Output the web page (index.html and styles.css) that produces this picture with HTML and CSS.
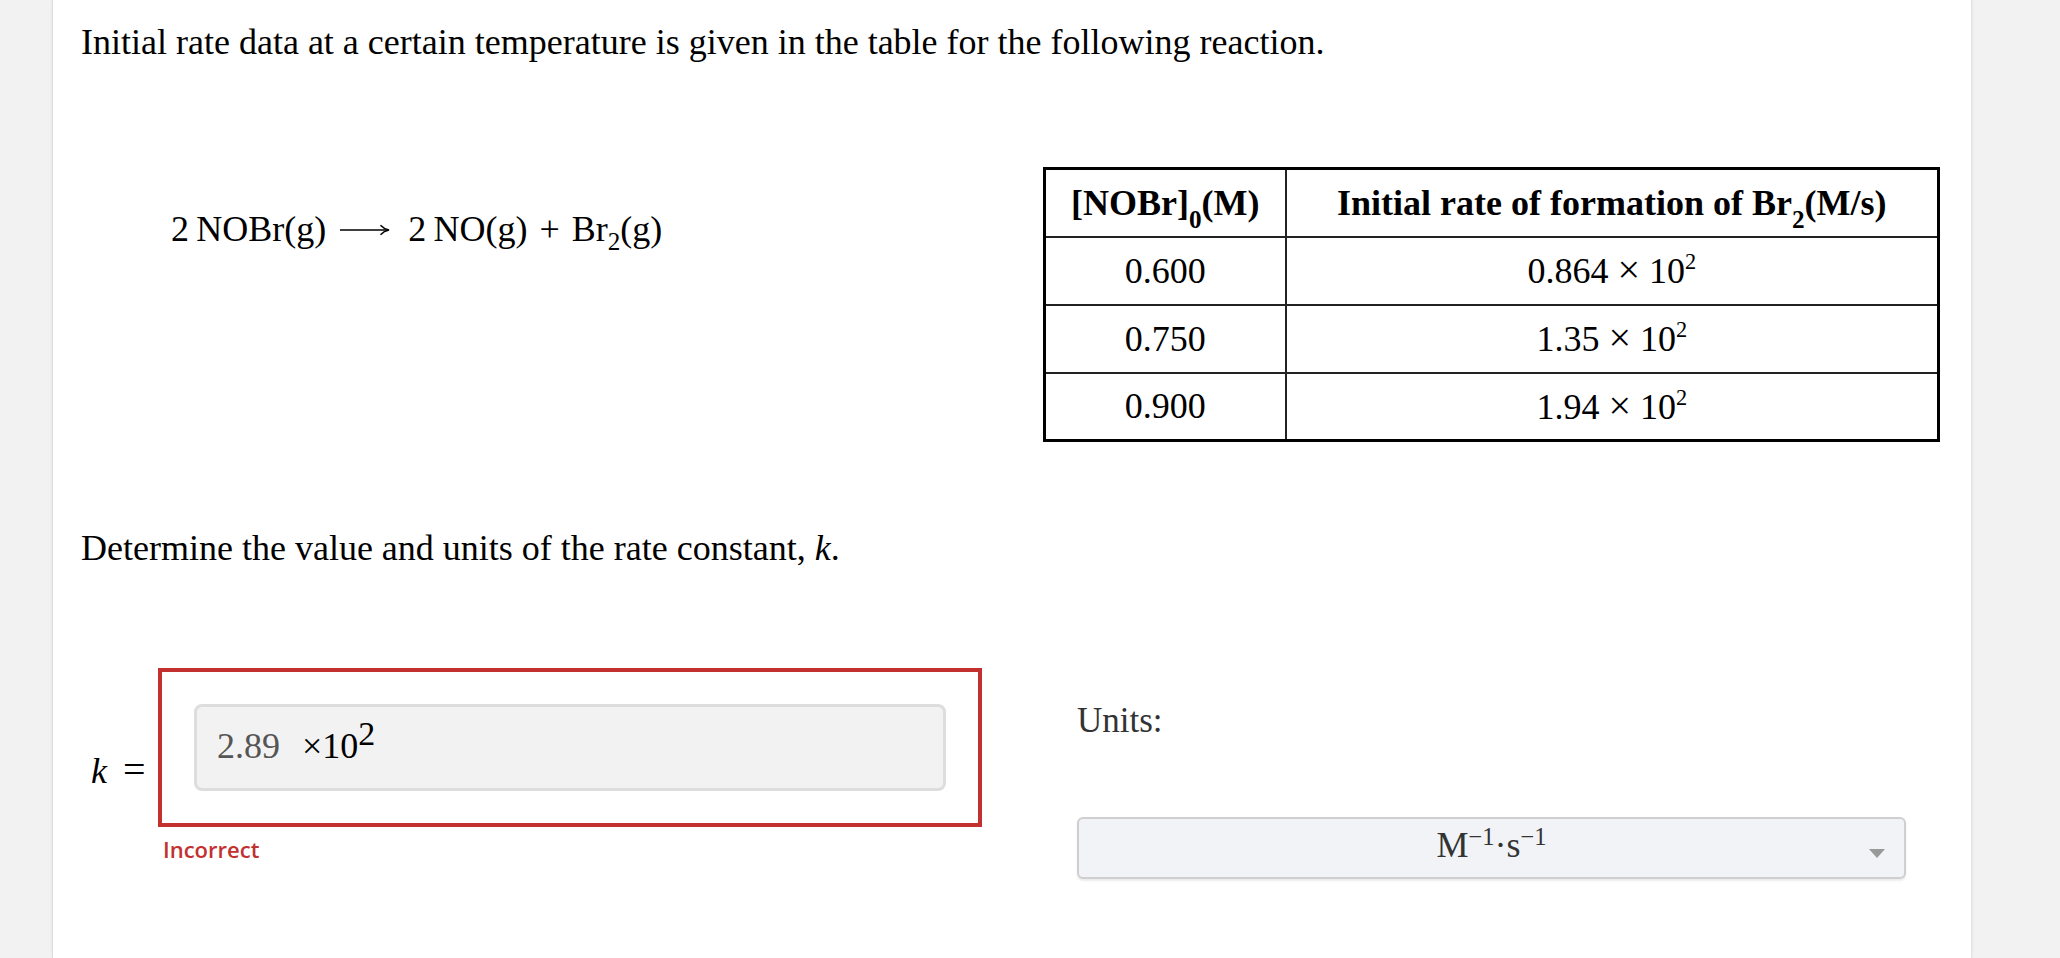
FILE: index.html
```html
<!DOCTYPE html>
<html lang="en">
<head>
<meta charset="utf-8">
<title>Rate constant</title>
<link rel="stylesheet" href="styles.css">
</head>
<body>
<main class="panel">
  <p class="intro">Initial rate data at a certain temperature is given in the table for the following reaction.</p>

  <div class="given">
    <div class="equation">2&thinsp;NOBr(g)<svg class="arrow" viewBox="0 0 50 14" width="50" height="14"><path d="M0 7H47.5" stroke="#000" stroke-width="1.7" fill="none"/><path d="M40.5 2.2Q44 6 49 7Q44 8 40.5 11.8" stroke="#000" stroke-width="1.5" fill="none"/></svg>2&thinsp;NO(g)<span class="op">+</span>Br<sub>2</sub>(g)</div>

    <table class="data">
      <tr>
        <th class="c1">[NOBr]<sub>0</sub>(M)</th>
        <th>Initial rate of formation of Br<sub>2</sub>(M/s)</th>
      </tr>
      <tr><td class="c1">0.600</td><td>0.864 <span class="x">×</span> 10<sup>2</sup></td></tr>
      <tr><td class="c1">0.750</td><td>1.35 <span class="x">×</span> 10<sup>2</sup></td></tr>
      <tr><td class="c1">0.900</td><td>1.94 <span class="x">×</span> 10<sup>2</sup></td></tr>
    </table>
  </div>

  <p class="prompt">Determine the value and units of the rate constant, <i>k</i>.</p>

  <div class="answer">
    <div class="k-col">
      <div class="k-row">
        <div class="k-label"><i>k</i><span class="eq">=</span></div>
        <div class="feedback-box">
          <div class="input"><span class="mantissa">2.89</span><span class="times">×10<span class="exp">2</span></span></div>
        </div>
      </div>
      <div class="incorrect">Incorrect</div>
    </div>
    <div class="units-col">
      <div class="units-label">Units:</div>
      <div class="select">M<sup>−1</sup>·s<sup>−1</sup><span class="caret"></span></div>
    </div>
  </div>
</main>
</body>
</html>
```

FILE: styles.css
```css
* { box-sizing: border-box; }

html, body { margin: 0; }

body {
  background: #f2f2f2;
  font-family: "Liberation Serif", "Times New Roman", serif;
  color: #000;
}

.panel {
  width: 1920px;
  min-height: 958px;
  margin-left: 52px;
  background: #fff;
  border-left: 1px solid #dedede;
  border-right: 1px solid #e2e2e2;
  box-shadow: 0 0 3px rgba(0, 0, 0, 0.07);
  padding: 18px 31px 0 28px;
}

.intro {
  margin: 0;
  font-size: 36px;
  line-height: 48px;
}

.given {
  display: flex;
  align-items: flex-start;
  margin-top: 101px;
}

.equation {
  flex: 0 0 962px;
  padding: 38px 0 0 90px;
  font-size: 36px;
  line-height: 48px;
  white-space: nowrap;
}

.op { margin: 0 12px; }

.arrow {
  width: 50px;
  height: 14px;
  vertical-align: 4px;
  margin: 0 18px 0 14px;
}

sub {
  font-size: 0.7em;
  vertical-align: -0.34em;
  line-height: 0;
}

sup {
  font-size: 0.62em;
  vertical-align: 0.62em;
  line-height: 0;
}

.data {
  width: 898px;
  border-collapse: collapse;
  border: 3px solid #000;
  font-size: 36px;
}

.data th,
.data td {
  border: 2px solid #222;
  height: 68px;
  padding: 0;
  text-align: center;
  vertical-align: middle;
  line-height: 40px;
}

.data th { font-weight: bold; }

.data th sub { vertical-align: -0.5em; }

.data .x { font-size: 40px; }

.data .c1 { width: 241px; }

.prompt {
  margin: 82px 0 0;
  font-size: 36px;
  line-height: 48px;
}

.answer {
  display: flex;
  margin-top: 96px;
}

.k-col { flex: 0 0 996px; }

.k-row {
  display: flex;
  align-items: flex-start;
}

.k-label {
  flex: 0 0 77px;
  padding-left: 10px;
  margin-top: 78px;
  font-size: 36px;
  line-height: 48px;
  white-space: nowrap;
}

.eq {
  margin-left: 16px;
  font-size: 40px;
}

.feedback-box {
  width: 824px;
  border: 4px solid #c2302f;
  padding: 32px;
}

.input {
  height: 87px;
  border: 3px solid #dddddd;
  border-radius: 8px;
  background: #f2f2f2;
  padding: 15px 20px 0;
  font-size: 36px;
  line-height: 48px;
  white-space: nowrap;
}

.mantissa { color: #555; }

.times {
  color: #000;
  margin-left: 22px;
}

.exp {
  font-size: 34px;
  vertical-align: 13px;
  line-height: 0;
}

.incorrect {
  margin: 7px 0 0 82px;
  font-family: "Open Sans", "Liberation Sans", sans-serif;
  font-weight: 600;
  font-size: 22px;
  line-height: 30px;
  color: #c2302f;
}

.units-col { flex: 1; }

.units-label {
  margin-top: 29px;
  font-size: 35px;
  line-height: 48px;
  color: #333;
}

.select {
  position: relative;
  width: 829px;
  height: 62px;
  margin-top: 72px;
  border: 2px solid #cfcfcf;
  border-radius: 6px;
  background: #f2f3f6;
  box-shadow: 0 2px 2px rgba(0, 0, 0, 0.08);
  text-align: center;
  font-size: 36px;
  line-height: 52px;
  color: #333;
}

.select sup {
  font-size: 0.68em;
  vertical-align: 0.5em;
}

.caret {
  position: absolute;
  right: 19px;
  top: 30px;
  width: 0;
  height: 0;
  border-left: 8px solid transparent;
  border-right: 8px solid transparent;
  border-top: 9px solid #999;
}
```
